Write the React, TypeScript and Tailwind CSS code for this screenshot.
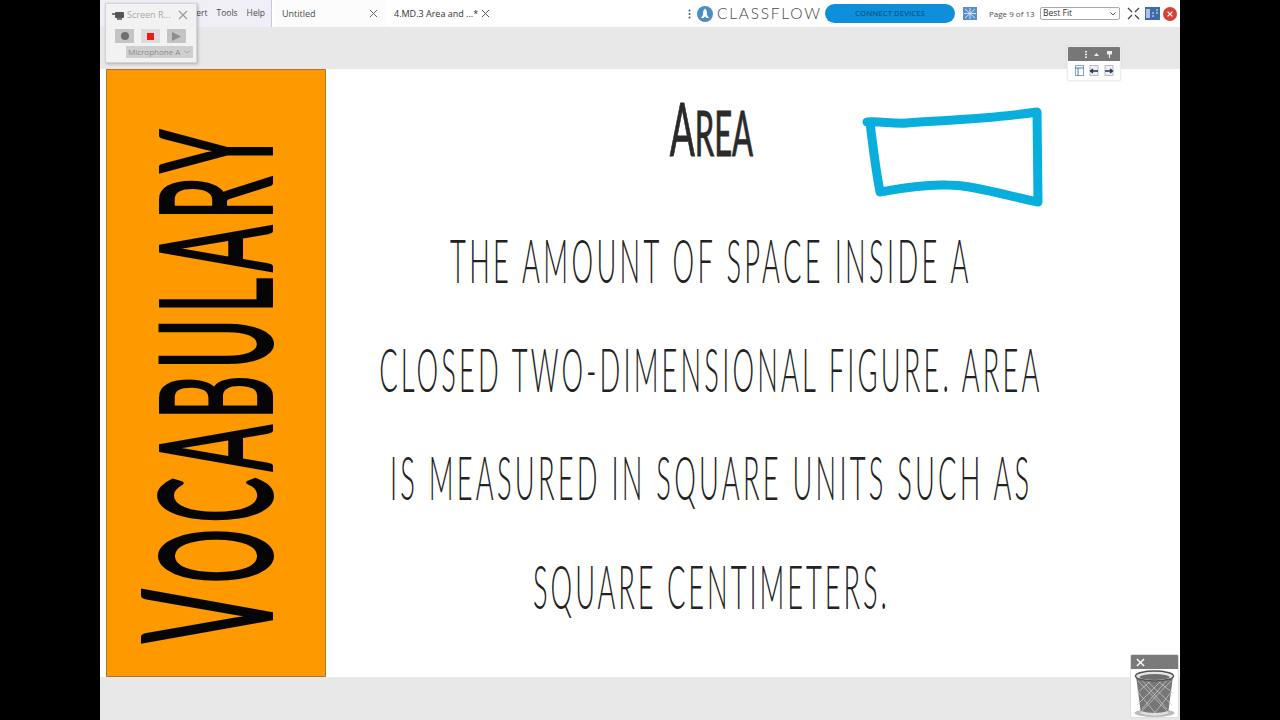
import React from "react";

const sans = "font-['Open_Sans','Noto_Sans',sans-serif]";

function X({ size = 10, color = "#666", sw = 1.1 }: { size?: number; color?: string; sw?: number }) {
  return (
    <svg width={size} height={size} viewBox="0 0 10 10" className="shrink-0">
      <path d="M1 1 9 9M9 1 1 9" stroke={color} strokeWidth={sw} fill="none" />
    </svg>
  );
}

function Line({ children, cls }: { children: React.ReactNode; cls: string }) {
  return (
    <div className="h-[108.5px] flex items-center justify-center">
      <div className={`whitespace-nowrap font-['Lato','Open_Sans',sans-serif] font-light text-[#222] text-[62px] scale-x-[0.44] leading-none ${cls}`}>{children}</div>
    </div>
  );
}

function Recorder() {
  return (
    <div className={`absolute left-[5px] top-[3px] w-[92px] h-[60px] bg-[#f2f2f2] border border-[#d4d4d4] shadow-[1px_1px_3px_rgba(0,0,0,0.25)] flex flex-col ${sans}`}>
      <div className="h-[21px] flex items-center pl-[6px] pr-[8px] gap-[2px]">
        <svg width="13" height="10" viewBox="0 0 13 10" className="shrink-0">
          <rect x="3" y="2" width="9" height="6" rx="1" fill="#555" />
          <path d="M0 3h3v2H0zM5 8h5v2H5z" fill="#777" />
        </svg>
        <span className="flex-1 text-[9px] text-[#a8a8a8] whitespace-nowrap">Screen R...</span>
        <X size={10} color="#999" />
      </div>
      <div className="flex gap-[7px] pl-[9px] mt-[4px]">
        <div className="w-[19px] h-[14px] bg-[#c4c4c4] flex items-center justify-center"><div className="w-[8px] h-[8px] rounded-full bg-[#707070]" /></div>
        <div className="w-[19px] h-[14px] bg-[#dcdcdc] flex items-center justify-center"><div className="w-[7px] h-[7px] bg-[#ee1c10]" /></div>
        <div className="w-[19px] h-[14px] bg-[#c4c4c4] flex items-center justify-center">
          <svg width="9" height="9" viewBox="0 0 9 9"><path d="M0 0 9 4.5 0 9z" fill="#8e8e8e" /></svg>
        </div>
      </div>
      <div className="ml-[20px] mt-[3px] w-[67px] h-[12px] bg-[#cfcfcf] flex items-center justify-between pl-[2px] pr-[3px]">
        <span className="text-[8px] text-[#8a8a8a] whitespace-nowrap">Microphone A</span>
        <svg width="6" height="4" viewBox="0 0 6 4"><path d="M0 .5 3 3 6 .5" stroke="#aaa" fill="none" /></svg>
      </div>
    </div>
  );
}

function TopBar() {
  return (
    <div className={`h-[27px] bg-white flex items-center shrink-0 text-[#4a4a4a] ${sans}`}>
      <div className="w-[172px] h-[27px] bg-[#f0eff7] border-r border-[#c8c8de] flex items-center justify-end pr-[6px] gap-[9px] text-[8.5px] shrink-0">
        <span>Insert</span>
        <span>Tools</span>
        <span>Help</span>
      </div>
      <div className="w-[111px] ml-[3px] h-[27px] bg-[#fcfcfc] flex items-center pl-[7px] pr-[8px] justify-between text-[9px] shrink-0">
        <span>Untitled</span>
        <X size={9} color="#666" />
      </div>
      <div className="w-[110px] h-[27px] ml-[2px] bg-white flex items-center pl-[6px] pr-[8px] justify-between text-[9px] text-[#333] shrink-0">
        <span className="whitespace-nowrap">4.MD.3 Area and ...*</span>
        <X size={9} color="#555" />
      </div>
      <div className="ml-[190px] flex items-center shrink-0">
        <svg width="3" height="10" viewBox="0 0 3 10"><circle cx="1.5" cy="1.5" r="1" fill="#555" /><circle cx="1.5" cy="5" r="1" fill="#555" /><circle cx="1.5" cy="8.5" r="1" fill="#555" /></svg>
        <svg width="16" height="16" viewBox="0 0 16 16" className="ml-[6px]">
          <circle cx="8" cy="8" r="8" fill="#4a8ec8" />
          <path d="M8 2.5c1.8 1.5 2.3 4 1.8 6.5H6.2C5.7 6.5 6.2 4 8 2.5Z" fill="#fff" />
          <path d="M6 9 4 12h2.5L8 10.5 9.5 12H12L10 9Z" fill="#fff" />
        </svg>
        <span className="ml-[4px] w-[104px] text-[15.5px] leading-none tracking-[1.75px] text-[#444] font-['Lato',sans-serif] font-light whitespace-nowrap">CLASSFLOW</span>
        <div className="ml-[4px] w-[130px] h-[19px] rounded-full bg-[#0e8fdc] flex items-center justify-center text-[7.8px] font-semibold text-[#0d5a8e]">CONNECT DEVICES</div>
        <svg width="14" height="13" viewBox="0 0 14 13" className="ml-[8px]">
          <rect width="14" height="13" fill="#5b8fc9" />
          <path d="M2 2 12 11M12 2 2 11M7 1v11M1 6.5h12" stroke="#d8e8f6" strokeWidth=".9" />
        </svg>
        <span className="ml-[12px] text-[8px] whitespace-nowrap w-[45px]">Page 9 of 13</span>
        <div className="ml-[6px] w-[80px] h-[13px] bg-white border border-[#aaa] rounded-[2px] flex items-center justify-between pl-[2px] pr-[3px] text-[8.5px] text-[#333]">
          <span>Best Fit</span>
          <svg width="6" height="4" viewBox="0 0 6 4"><path d="M.5.5 3 3 5.5.5" stroke="#555" fill="none" /></svg>
        </div>
        <svg width="13" height="13" viewBox="0 0 13 13" className="ml-[7px]">
          <path d="M1 1 5 5M12 1 8 5M1 12 5 8M12 12 8 8" stroke="#444" strokeWidth="1.3" />
        </svg>
        <svg width="15" height="13" viewBox="0 0 15 13" className="ml-[5px]">
          <rect width="15" height="13" fill="#3e6ca8" />
          <rect x="1" y="2" width="4" height="9" fill="#a9c4e2" />
          <path d="M7 6h2M7 9h2M11 3h2M11 6h2" stroke="#d9e6f3" />
        </svg>
        <div className="ml-[3px] w-[14px] h-[14px] rounded-full bg-[#d8403a] flex items-center justify-center"><X size={6} color="#fff" sw={2} /></div>
      </div>
    </div>
  );
}

function Tools() {
  return (
    <div className="absolute right-[59px] top-[46px] w-[54px] h-[35px] rounded-[2px] bg-white border border-[#eee] shadow-[0_0_2px_rgba(0,0,0,0.12)] overflow-hidden">
      <div className="h-[14px] bg-[#777] flex items-center justify-end pr-[7px] gap-[7px]">
        <svg width="2" height="7" viewBox="0 0 2 7"><path d="M0 0h2v1.5H0zM0 2.7h2v1.5H0zM0 5.4h2V7H0z" fill="#eee" /></svg>
        <svg width="5" height="3" viewBox="0 0 5 3"><path d="M0 3 2.5 0 5 3z" fill="#eee" /></svg>
        <svg width="7" height="7" viewBox="0 0 7 7"><path d="M1 0h5v3.5H4V7H3V3.5H1z" fill="#eee" /></svg>
      </div>
      <div className="flex justify-center gap-[5px] mt-[4px]">
        <svg width="9" height="11" viewBox="0 0 9 11"><rect x=".5" y=".5" width="8" height="10" fill="#fff" stroke="#8aa4c0" /><path d="M0 3h9M3 3v8" stroke="#4a7db0" /></svg>
        <svg width="10" height="11" viewBox="0 0 10 11"><rect x="1" y=".5" width="8" height="10" fill="#eef" stroke="#bbb" /><path d="M9 6H2M4 4 1.5 6 4 8" stroke="#234" strokeWidth="1.3" fill="none" /></svg>
        <svg width="10" height="11" viewBox="0 0 10 11"><rect x="1" y=".5" width="8" height="10" fill="#eef" stroke="#bbb" /><path d="M1 6h7M6 4 8.5 6 6 8" stroke="#234" strokeWidth="1.3" fill="none" /></svg>
      </div>
    </div>
  );
}

function Trash() {
  return (
    <div className="absolute right-[1px] bottom-[2px] w-[49px] h-[64px] rounded-[2px] bg-white border border-[#ddd] overflow-hidden">
      <div className="h-[14px] bg-[#7a7a7a] pl-[5px] flex items-center"><X size={9} color="#fff" sw={1.5} /></div>
      <svg width="47" height="49" viewBox="0 0 47 49">
        <ellipse cx="23.5" cy="44" rx="20" ry="4" fill="#bbb" />
        <path d="M5 7 10 45Q23.5 49 37 45L42 7Z" fill="#777" />
        <path d="M7 12 38 44M14 10 41 36M24 10 42 24M6 22 26 46M40 12 9 44M32 10 6 36M22 10 6 24M41 22 22 46M10 10 36 40M37 10 11 40" stroke="#cfcfcf" strokeWidth=".7" />
        <path d="M10 45Q23.5 49 37 45L37.5 42Q23.5 46 9.5 42Z" fill="#ddd" />
        <ellipse cx="23.5" cy="7" rx="19" ry="5" fill="#e6e6e6" stroke="#555" strokeWidth="1.5" />
        <ellipse cx="23.5" cy="8" rx="15" ry="3" fill="#6e6e6e" />
      </svg>
    </div>
  );
}

export default function App() {
  return (
    <div className="w-[1280px] h-[720px] bg-black flex justify-center overflow-hidden">
      <div className="relative w-[1080px] h-[720px] bg-[#e8e8e8] flex flex-col">
        <TopBar />
        <div className="h-[42px] shrink-0" />
        <div className="h-[608px] shrink-0 bg-white flex pl-[6px]">
          <div className="w-[220px] h-[608px] bg-[#ff9900] border border-[#a97a2e] flex items-center justify-center shrink-0">
            <span className="block w-[0px] flex justify-center -rotate-90 translate-x-[-14px] translate-y-[10px] whitespace-nowrap font-['Lato',sans-serif] font-normal text-[#050505] leading-none [-webkit-text-stroke:4px_#050505] [paint-order:stroke] text-[153px]">
              <span className="inline-block scale-x-[0.44] tracking-[15px]"><span className="text-[178px]">V</span>OCABULARY</span>
            </span>
          </div>
          <div className="relative w-[770px] shrink-0 flex flex-col pt-[136px]">
            <div className="absolute left-0 right-0 top-[31px] flex justify-center">
              <span className="inline-block font-['Lato',sans-serif] font-normal text-[#2a2a2a] text-[62px] leading-[56px] scale-x-[0.5] [-webkit-text-stroke:1px_#2a2a2a]"><span className="text-[74px]">A</span>REA</span>
            </div>
            <svg width="184" height="102" viewBox="0 0 184 102" className="absolute left-[535px] top-[37px]">
              <path d="M6 16C20 15 30 18 46 17 90 14 130 13 176 6L177 96C140 88 110 79 86 79 60 78 35 83 19 86 14 60 12 40 9 17" fill="none" stroke="#08afdc" strokeWidth="9" strokeLinecap="round" strokeLinejoin="round" />
            </svg>
            <Line cls="tracking-[7.6px]">THE AMOUNT OF SPACE INSIDE A</Line>
            <Line cls="tracking-[7.2px]">CLOSED TWO-DIMENSIONAL FIGURE. AREA</Line>
            <Line cls="tracking-[7.4px]">IS MEASURED IN SQUARE UNITS SUCH AS</Line>
            <Line cls="tracking-[6.7px]">SQUARE CENTIMETERS.</Line>
          </div>
        </div>
        <Recorder />
        <Tools />
        <Trash />
      </div>
    </div>
  );
}
